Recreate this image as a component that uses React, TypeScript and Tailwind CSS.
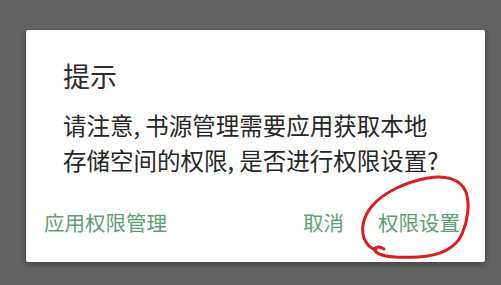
import React from 'react';

const font = { fontFamily: '"Noto Sans CJK SC", "Noto Sans", sans-serif' };

// Hand-drawn red mark around the confirm button
const RedCircle: React.FC = () => (
  <svg
    className="pointer-events-none absolute left-0 top-0"
    width="501"
    height="285"
    viewBox="0 0 501 285"
    fill="none"
  >
    <path
      d="M384 249 C378 245 372 248 376 252 C382 257 398 258 418 257 C440 256 456 248 462 234 C468 220 470 204 466 192 C460 178 444 175 428 178 C406 182 384 192 372 206 C362 218 360 232 366 242 C369 247 372 249 376 250"
      stroke="#d81e1e"
      strokeWidth="3"
      strokeLinecap="round"
      strokeLinejoin="round"
    />
  </svg>
);

export default function App() {
  return (
    <div className="relative h-[285px] w-[501px] overflow-hidden bg-[#626262] pl-[26px] pt-[30px]" style={font}>
      <div className="flex h-[232px] w-[459px] flex-col rounded-[2px] bg-white shadow-[0_2px_6px_rgba(0,0,0,0.35)]">
        <div className="pl-[37px] pt-[29px] text-[27px] leading-[34px] text-[#2b2b2b]">提示</div>
        <div className="mt-[15px] pl-[37px] text-[23.5px] leading-[35px] text-[#262626]">
          <p>请注意, 书源管理需要应用获取本地</p>
          <p>存储空间的权限, 是否进行权限设置?</p>
        </div>
        <div className="mt-auto mb-[26px] flex items-center pl-[18px] pr-[25px] text-[20.5px] leading-[28px] text-[#5c9f73]">
          <button className="cursor-pointer">应用权限管理</button>
          <div className="flex-1" />
          <button className="cursor-pointer">取消</button>
          <button className="ml-[34px] cursor-pointer">权限设置</button>
        </div>
      </div>
      <RedCircle />
    </div>
  );
}
